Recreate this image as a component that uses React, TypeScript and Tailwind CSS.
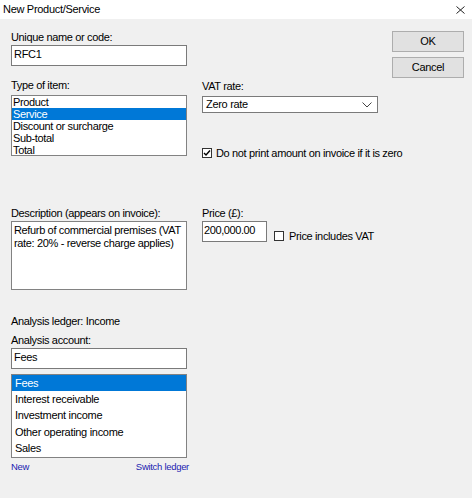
import React from 'react';

const font = { fontFamily: '"Liberation Sans", Arial, sans-serif' };

const typeItems = ['Product', 'Service', 'Discount or surcharge', 'Sub-total', 'Total'];
const accounts = ['Fees', 'Interest receivable', 'Investment income', 'Other operating income', 'Sales'];

function Label({ children, className = '' }: { children: React.ReactNode; className?: string }) {
  return <div className={`h-[13px] text-[11px] leading-[13px] tracking-[-0.35px] text-black ${className}`}>{children}</div>;
}

function Button({ children, className = '' }: { children: React.ReactNode; className?: string }) {
  return (
    <div
      className={`flex h-[21px] w-[72px] items-center justify-center border border-[#adadad] bg-[#e1e1e1] text-[11px] tracking-[-0.3px] text-black ${className}`}
    >
      {children}
    </div>
  );
}

function CheckBox({ checked }: { checked?: boolean }) {
  return (
    <div className="flex h-[10px] w-[10px] shrink-0 items-center justify-center border border-[#333] bg-white">
      {checked && (
        <svg width="8" height="8" viewBox="0 0 8 8">
          <polyline points="1,4 3,6 7,1.5" fill="none" stroke="#000" strokeWidth="1.4" />
        </svg>
      )}
    </div>
  );
}

export default function App() {
  return (
    <div className="h-[502px] w-[474px] overflow-hidden bg-white" style={font}>
      {/* Title bar */}
      <div className="flex h-[19px] w-[472px] items-center justify-between pl-[3px] pr-[7px]">
        <span className="text-[11px] tracking-[-0.3px] text-black">New Product/Service</span>
        <svg width="9" height="8" viewBox="0 0 9 8">
          <line x1="0.5" y1="0.5" x2="8.5" y2="7.5" stroke="#222" strokeWidth="1" />
          <line x1="8.5" y1="0.5" x2="0.5" y2="7.5" stroke="#222" strokeWidth="1" />
        </svg>
      </div>

      {/* Dialog body */}
      <div className="h-[479px] w-[472px] bg-[#f0f0f0] pl-[11px] pt-[12px]">
        {/* Name + buttons */}
        <div className="flex">
          <div className="w-[176px]">
            <Label>Unique name or code:</Label>
            <div className="mt-[1px] h-[21px] border border-[#7a7a7a] bg-white pl-[2px] pt-[2px] text-[11px] leading-[13px] tracking-[-0.3px]">
              RFC1
            </div>
          </div>
          <div className="ml-[205px] flex flex-col gap-[5px]">
            <Button>OK</Button>
            <Button>Cancel</Button>
          </div>
        </div>

        {/* Type of item + VAT */}
        <div className="mt-[1px] flex">
          <div className="w-[176px]">
            <Label>Type of item:</Label>
            <div className="mt-[3px] h-[61px] border border-[#828282] bg-white">
              {typeItems.map((t, i) => (
                <div
                  key={t}
                  className={`h-[12px] pl-[1px] text-[11px] leading-[12px] tracking-[-0.35px] ${
                    i === 1 ? 'bg-[#0078d7] text-white' : 'text-black'
                  }`}
                >
                  {t}
                </div>
              ))}
            </div>
          </div>
          <div className="ml-[15px] w-[176px] pt-[1px]">
            <Label>VAT rate:</Label>
            <div className="mt-[3px] flex h-[17px] items-center justify-between border border-[#7a7a7a] bg-white pl-[3px] pr-[5px] text-[11px] tracking-[-0.3px]">
              <span>Zero rate</span>
              <svg width="10" height="6" viewBox="0 0 10 6">
                <polyline points="0.5,0.5 5,5 9.5,0.5" fill="none" stroke="#444" strokeWidth="1" />
              </svg>
            </div>
            <div className="mt-[32px] flex items-center gap-[4px] whitespace-nowrap">
              <CheckBox checked />
              <span className="text-[11px] tracking-[-0.35px]">Do not print amount on invoice if it is zero</span>
            </div>
          </div>
        </div>

        {/* Description + price */}
        <div className="mt-[45px] flex">
          <div className="w-[176px]">
            <Label>Description (appears on invoice):</Label>
            <div className="mt-[1px] h-[69px] border border-[#828282] bg-white pl-[2px] pt-[2px] text-[11px] leading-[13px] tracking-[-0.35px]">
              Refurb of commercial premises (VAT rate: 20% - reverse charge applies)
            </div>
          </div>
          <div className="ml-[15px]">
            <Label>Price (£):</Label>
            <div className="mt-[1px] flex items-start">
              <div className="h-[21px] w-[65px] border border-[#7a7a7a] bg-white pl-[1px] pt-[2px] text-[11px] leading-[13px] tracking-[-0.4px]">
                200,000.00
              </div>
              <div className="ml-[7px] mt-[7px] flex items-center gap-[5px] whitespace-nowrap">
                <CheckBox />
                <span className="text-[11px] tracking-[-0.35px]">Price includes VAT</span>
              </div>
            </div>
          </div>
        </div>

        {/* Analysis */}
        <div className="mt-[25px] w-[178px]">
          <Label>Analysis ledger: Income</Label>
          <Label className="mt-[6px]">Analysis account:</Label>
          <div className="mt-[1px] h-[21px] w-[176px] border border-[#7a7a7a] bg-white pl-[2px] pt-[2px] text-[11px] leading-[13px] tracking-[-0.3px]">
            Fees
          </div>
          <div className="mt-[5px] h-[84px] w-[176px] border border-[#828282] bg-white">
            {accounts.map((a, i) => (
              <div
                key={a}
                className={`h-[16.4px] pl-[3px] text-[11px] leading-[16.4px] tracking-[-0.3px] ${
                  i === 0 ? 'bg-[#0078d7] text-white' : 'text-black'
                }`}
              >
                {a}
              </div>
            ))}
          </div>
          <div className="mt-[3px] flex justify-between text-[9.5px] leading-[12px] tracking-[-0.3px] text-[#1c1cb0]">
            <span>New</span>
            <span>Switch ledger</span>
          </div>
        </div>
      </div>
    </div>
  );
}
